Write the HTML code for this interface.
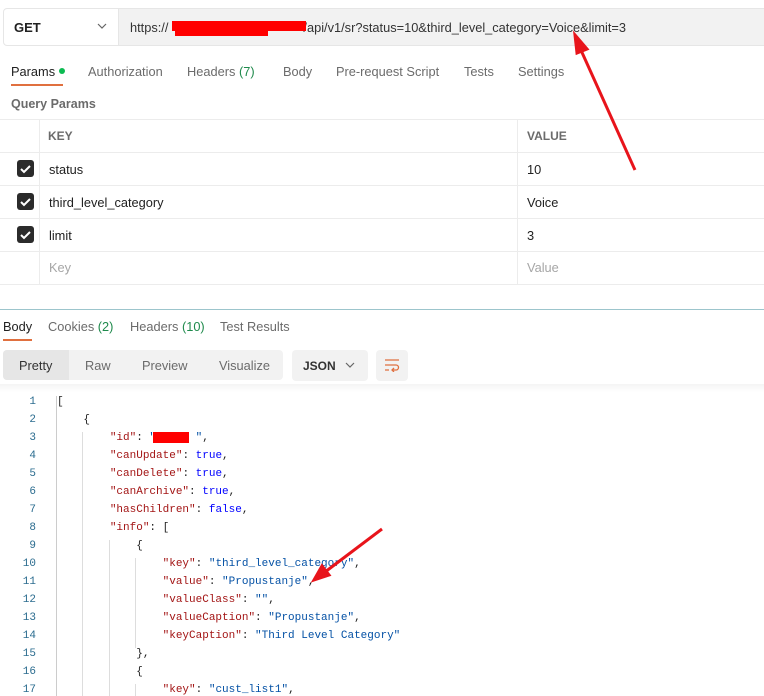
<!DOCTYPE html>
<html><head><meta charset="utf-8"><style>
*{margin:0;padding:0;box-sizing:border-box}
body{width:764px;height:696px;overflow:hidden;background:#fff;font-family:"Liberation Sans",Arial,sans-serif;font-size:12.8px;color:#212121;position:relative}
.a{position:absolute;white-space:nowrap}
.g{color:#6b6b6b}
.code{font-family:"Liberation Mono",monospace;font-size:11px}
.ln{position:absolute;width:36px;text-align:right;color:#2b6c8f;font-family:"Liberation Mono",monospace;font-size:11px}
.k{color:#a31515}.s{color:#0451a5}.b{color:#0000ff}
.hl{position:absolute;height:1px;background:#ececec}
.cb{position:absolute;left:17px;width:17px;height:17px;background:#2b2b2b;border-radius:3px}
</style></head><body>
<div class="a" style="left:3px;top:8px;width:116px;height:38px;border:1px solid #e6e6e6;border-radius:4px 0 0 4px;background:#fff"></div>
<div class="a" style="left:14px;top:20px;font-weight:bold;font-size:13px;color:#212121">GET</div>
<svg class="a" style="left:97px;top:23px" width="10" height="7"><path d="M1 1l4 4 4-4" fill="none" stroke="#666" stroke-width="1.2"/></svg>
<div class="a" style="left:119px;top:8px;width:645px;height:38px;background:#f2f2f2;border-top:1px solid #e6e6e6;border-bottom:1px solid #e6e6e6"></div>
<div class="a" style="left:130px;top:20px;color:#333">https://<span style="display:inline-block;width:135px"></span>/api/v1/sr?status=10&amp;third_level_category=Voice&amp;limit=3</div>
<div class="a" style="left:172px;top:21px;width:134px;height:10px;background:#f00"></div>
<div class="a" style="left:175px;top:29px;width:93px;height:7px;background:#f00"></div>
<div class="a" style="left:11px;top:64px">Params <span style="display:inline-block;width:6px;height:6px;border-radius:3px;background:#0cbb52;vertical-align:2px"></span></div>
<div class="a" style="left:11px;top:84px;width:52px;height:2px;background:#e0703f"></div>
<div class="a g" style="left:88px;top:64px">Authorization</div>
<div class="a g" style="left:187px;top:64px">Headers <span style="color:#1f8a4c">(7)</span></div>
<div class="a g" style="left:283px;top:64px">Body</div>
<div class="a g" style="left:336px;top:64px">Pre-request Script</div>
<div class="a g" style="left:464px;top:64px">Tests</div>
<div class="a g" style="left:518px;top:64px">Settings</div>
<div class="a" style="left:11px;top:97px;font-weight:bold;font-size:12.5px;color:#6b6b6b">Query Params</div>
<div class="hl" style="left:0;top:119px;width:764px"></div>
<div class="hl" style="left:0;top:152px;width:764px"></div>
<div class="hl" style="left:0;top:185px;width:764px"></div>
<div class="hl" style="left:0;top:218px;width:764px"></div>
<div class="hl" style="left:0;top:251px;width:764px"></div>
<div class="hl" style="left:0;top:284px;width:764px"></div>
<div class="a" style="left:39px;top:119px;width:1px;height:165px;background:#ececec"></div>
<div class="a" style="left:517px;top:119px;width:1px;height:165px;background:#ececec"></div>
<div class="a" style="left:48px;top:129px;font-weight:bold;font-size:12px;color:#6b6b6b">KEY</div>
<div class="a" style="left:527px;top:129px;font-weight:bold;font-size:12px;color:#6b6b6b">VALUE</div>
<div class="cb" style="top:160px"></div><div class="cb" style="top:193px"></div><div class="cb" style="top:226px"></div>
<svg class="a" style="left:17px;top:160px" width="17" height="90"><g fill="none" stroke="#fff" stroke-width="2"><path d="M4 9l3 3 6-6"/><path d="M4 42l3 3 6-6"/><path d="M4 75l3 3 6-6"/></g></svg>
<div class="a" style="left:49px;top:162px">status</div>
<div class="a" style="left:49px;top:195px">third_level_category</div>
<div class="a" style="left:49px;top:228px">limit</div>
<div class="a" style="left:49px;top:260px;color:#a6a6a6">Key</div>
<div class="a" style="left:527px;top:162px">10</div>
<div class="a" style="left:527px;top:195px">Voice</div>
<div class="a" style="left:527px;top:228px">3</div>
<div class="a" style="left:527px;top:260px;color:#a6a6a6">Value</div>
<div class="a" style="left:0;top:309px;width:764px;height:1px;background:#9cc5cc"></div>
<div class="a" style="left:3px;top:319px">Body</div>
<div class="a" style="left:3px;top:339px;width:29px;height:2px;background:#e0703f"></div>
<div class="a g" style="left:48px;top:319px">Cookies <span style="color:#1f8a4c">(2)</span></div>
<div class="a g" style="left:130px;top:319px">Headers <span style="color:#1f8a4c">(10)</span></div>
<div class="a g" style="left:220px;top:319px">Test Results</div>
<div class="a" style="left:3px;top:350px;width:280px;height:30px;background:#f2f2f2;border-radius:4px"></div>
<div class="a" style="left:3px;top:350px;width:66px;height:30px;background:#e6e6e6;border-radius:4px 0 0 4px"></div>
<div class="a" style="left:19px;top:358px;color:#333">Pretty</div>
<div class="a g" style="left:85px;top:358px">Raw</div>
<div class="a g" style="left:142px;top:358px">Preview</div>
<div class="a g" style="left:219px;top:358px">Visualize</div>
<div class="a" style="left:292px;top:350px;width:76px;height:31px;background:#f2f2f2;border-radius:4px"></div>
<div class="a" style="left:303px;top:359px;font-weight:bold;font-size:12px;color:#333">JSON</div>
<svg class="a" style="left:345px;top:362px" width="10" height="7"><path d="M1 1l4 4 4-4" fill="none" stroke="#666" stroke-width="1.2"/></svg>
<div class="a" style="left:376px;top:350px;width:32px;height:31px;background:#f2f2f2;border-radius:4px"></div>
<svg class="a" style="left:384px;top:358px" width="16" height="14"><g fill="none" stroke="#e0703f" stroke-width="1.3"><path d="M1 2h14M1 7h11a2.5 2.5 0 0 1 0 5H8M1 12h4"/><path d="M10 10l-2 2 2 2"/></g></svg>
<div class="a" style="left:0;top:384px;width:764px;height:8px;background:linear-gradient(#f4f4f4,#fff)"></div>
<div class="a" style="left:56px;top:396px;width:1px;height:300px;background:#ccc"></div>
<div class="a" style="left:82px;top:432px;width:1px;height:264px;background:#ddd"></div>
<div class="a" style="left:109px;top:540px;width:1px;height:156px;background:#ddd"></div>
<div class="a" style="left:135px;top:558px;width:1px;height:90px;background:#ddd"></div>
<div class="a" style="left:135px;top:684px;width:1px;height:12px;background:#ddd"></div>
<div id="c"></div>
<div class="a" style="left:153px;top:432px;width:36px;height:11px;background:#f00"></div>
<svg class="a" style="left:0;top:0" width="764" height="696"><g stroke="#e8141b" stroke-width="3" fill="#e8141b">
<line x1="635" y1="170" x2="580" y2="48"/><path d="M575 35l12 14-10 4z"/>
<line x1="382" y1="529" x2="325" y2="572"/><path d="M314 580l8-14 7 9z"/></g></svg>
<script>
var L=[
'[',
'    {',
'        <span class=k>"id"</span>: <span class=s>"      "</span>,',
'        <span class=k>"canUpdate"</span>: <span class=b>true</span>,',
'        <span class=k>"canDelete"</span>: <span class=b>true</span>,',
'        <span class=k>"canArchive"</span>: <span class=b>true</span>,',
'        <span class=k>"hasChildren"</span>: <span class=b>false</span>,',
'        <span class=k>"info"</span>: [',
'            {',
'                <span class=k>"key"</span>: <span class=s>"third_level_category"</span>,',
'                <span class=k>"value"</span>: <span class=s>"Propustanje"</span>,',
'                <span class=k>"valueClass"</span>: <span class=s>""</span>,',
'                <span class=k>"valueCaption"</span>: <span class=s>"Propustanje"</span>,',
'                <span class=k>"keyCaption"</span>: <span class=s>"Third Level Category"</span>',
'            },',
'            {',
'                <span class=k>"key"</span>: <span class=s>"cust_list1"</span>,'];
var h='';for(var i=0;i<L.length;i++){var y=396+i*18;h+='<div class="ln" style="left:0;top:'+y+'px">'+(i+1)+'</div><div class="a code" style="left:57px;top:'+y+'px;white-space:pre">'+L[i]+'</div>';}
document.getElementById('c').innerHTML=h;
</script>
</body></html>
